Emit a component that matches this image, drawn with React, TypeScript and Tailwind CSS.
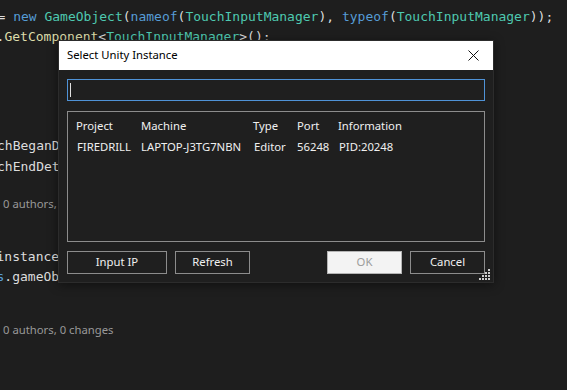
import React from 'react';

const CodeLine: React.FC<{ offset: string; top: string; children: React.ReactNode }> = ({ offset, top, children }) => (
  <div className={`h-[20px] leading-[20px] whitespace-nowrap text-[13px] text-[#dcdcdc] ${offset} ${top}`}>{children}</div>
);

const App: React.FC = () => {
  return (
    <div className="relative w-[567px] h-[390px] overflow-hidden bg-[#1e1e1e] font-['Noto_Sans',sans-serif]">
      {/* editor behind the dialog */}
      <div className="pt-[7px] font-['DejaVu_Sans_Mono',monospace]">
        <CodeLine offset="ml-[-2.5px]" top="">
          = <span className="text-[#569cd6]">new</span> <span className="text-[#4ec9b0]">GameObject</span>(
          <span className="text-[#569cd6]">nameof</span>(<span className="text-[#4ec9b0]">TouchInputManager</span>),{' '}
          <span className="text-[#569cd6]">typeof</span>(<span className="text-[#4ec9b0]">TouchInputManager</span>));
        </CodeLine>
        <CodeLine offset="ml-[-3.4px]" top="">
          .<span className="text-[#dcdcaa]">GetComponent</span>&lt;<span className="text-[#4ec9b0]">TouchInputManager</span>&gt;();
        </CodeLine>

        {/* lines hidden by the dialog: only the visible part is kept */}
        <div className="w-[58px] overflow-hidden">
          <CodeLine offset="ml-[-3px]" top="mt-[89px]">chBeganD</CodeLine>
          <CodeLine offset="ml-[-3px]" top="mt-[1px]">chEndDet</CodeLine>
          <div className="mt-[19px] ml-[3px] h-[16px] leading-[16px] whitespace-nowrap text-[11.3px] text-[#999999] font-['Noto_Sans',sans-serif]">
            0 authors,
          </div>
          <CodeLine offset="ml-[-3.5px]" top="mt-[35px]">instance</CodeLine>
          <CodeLine offset="ml-[-3.5px]" top="">
            <span className="text-[#569cd6]">s</span>.gameOb
          </CodeLine>
        </div>
        <div className="mt-[35px] ml-[3px] h-[16px] leading-[16px] text-[11.3px] text-[#999999] font-['Noto_Sans',sans-serif]">
          0 authors, 0 changes
        </div>
      </div>

      {/* Select Unity Instance dialog */}
      <div className="absolute left-[58px] top-[40px] w-[436px] h-[243px] flex flex-col bg-[#1f1f1f] border border-[#2c2c2c] shadow-[0_2px_10px_rgba(0,0,0,0.45)]">
        <div className="h-[29px] shrink-0 bg-white flex items-center justify-between pl-[8px] pr-[14px]">
          <span className="text-[11.3px] text-black">Select Unity Instance</span>
          <svg width="11" height="11" viewBox="0 0 11 11">
            <path d="M0.5 0.5L10.5 10.5M10.5 0.5L0.5 10.5" stroke="#111" strokeWidth="1" />
          </svg>
        </div>

        <div className="flex-1 flex flex-col px-[8px] pt-[9px] pb-[8px]">
          <div className="h-[22px] border border-[#4f92d6] flex items-center pl-[2px]">
            <div className="w-px h-[14px] bg-[#e0e0e0]" />
          </div>

          <div className="mt-[10px] h-[131px] border border-[#8c8c8c] pt-[3px] pl-[8px] text-[11.3px] text-[#f0f0f0]">
            <div className="grid grid-cols-[65px_112px_44px_41px_1fr] h-[21px] leading-[21px]">
              <span>Project</span>
              <span>Machine</span>
              <span>Type</span>
              <span>Port</span>
              <span>Information</span>
            </div>
            <div className="grid grid-cols-[65px_112px_44px_41px_1fr] h-[21px] leading-[21px]">
              <span className="pl-px">FIREDRILL</span>
              <span>LAPTOP-J3TG7NBN</span>
              <span className="pl-px">Editor</span>
              <span>56248</span>
              <span className="pl-px">PID:20248</span>
            </div>
          </div>

          <div className="mt-[9px] flex items-center text-[11.3px]">
            <button className="w-[100px] h-[23px] border border-[#8c8c8c] text-[#f0f0f0]">Input IP</button>
            <button className="ml-[8px] w-[75px] h-[23px] border border-[#8c8c8c] text-[#f0f0f0]">Refresh</button>
            <button className="ml-auto w-[75px] h-[23px] border border-[#b4b4b4] bg-[#f3f3f3] text-[#9c9c9c]">OK</button>
            <button className="ml-[8px] w-[75px] h-[23px] border border-[#8c8c8c] text-[#f0f0f0]">Cancel</button>
          </div>
        </div>

        {/* resize grip */}
        <svg className="absolute right-[3px] bottom-[2px]" width="11" height="11" viewBox="0 0 11 11">
          {[0, 1, 2, 3].flatMap(r =>
            [0, 1, 2, 3].filter(c => c >= 3 - r).map(c => (
              <rect key={`${r}-${c}`} x={c * 3} y={r * 3} width="2" height="2" fill="#d0d0d0" />
            ))
          )}
        </svg>
      </div>
    </div>
  );
};

export default App;
